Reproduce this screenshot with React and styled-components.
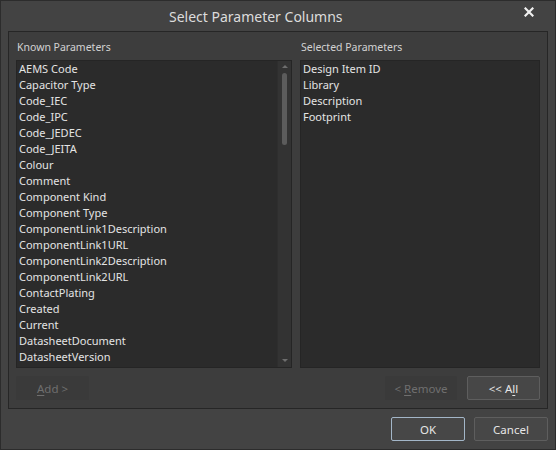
import React from 'react'
import styled, { createGlobalStyle } from 'styled-components'

const Global = createGlobalStyle`
  html, body {
    margin: 0;
    padding: 0;
    background: #424242;
  }
  body {
    font-family: "Noto Sans", "Open Sans", sans-serif;
  }
`

const Window = styled.div`
  width: 556px;
  height: 450px;
  box-sizing: border-box;
  border: 1px solid #2c2c2c;
  background: #434343;
  display: flex;
  flex-direction: column;
`

const TitleBar = styled.div`
  height: 30px;
  display: flex;
  align-items: center;
  position: relative;
  color: #dcdcdc;
  font-size: 14px;
  font-weight: 400;
  padding-left: 168px;
  box-sizing: border-box;
`

const Close = styled.div`
  position: absolute;
  right: 20px;
  top: 5px;
  width: 12px;
  height: 12px;
  display: flex;
  align-items: center;
  justify-content: center;
`

const Group = styled.div`
  margin: 0 7px;
  height: 378px;
  box-sizing: border-box;
  border: 1px solid #262626;
  background: #3d3d3d;
  padding: 6px 6px 0 7px;
  display: flex;
  flex-direction: column;
`

const Columns = styled.div`
  display: grid;
  grid-template-columns: 276px 240px;
  column-gap: 8px;
`

const Label = styled.div`
  font-size: 10.5px;
  color: #d2d2d2;
  height: 22px;
  padding-left: 1px;
  line-height: 18px;
`

const ListBox = styled.div`
  height: 308px;
  box-sizing: border-box;
  border: 1px solid #252525;
  background: #2b2b2b;
  display: flex;
  overflow: hidden;
`

const Items = styled.div`
  flex: 1;
  padding: 0 0 0 2px;
`

const Item = styled.div`
  height: 16px;
  line-height: 16px;
  font-size: 11px;
  color: #e4e4e4;
  white-space: nowrap;
`

const Scroll = styled.div`
  width: 13px;
  background: #333333;
  border-left: 1px solid #2e2e2e;
  display: flex;
  flex-direction: column;
  align-items: center;
`

const Arrow = styled.div`
  width: 0;
  height: 0;
  border-left: 3px solid transparent;
  border-right: 3px solid transparent;
  ${p => p.$up
    ? 'border-bottom: 3px solid #6e6e6e; margin: 4px 0 5px;'
    : 'border-top: 3px solid #6e6e6e; margin: auto 0 5px;'}
`

const Thumb = styled.div`
  width: 5px;
  height: 72px;
  border-radius: 3px;
  background: #5c5c5c;
`

const ButtonRow = styled.div`
  display: flex;
  margin-top: 8px;
  height: 24px;
  gap: 10px;
  justify-content: ${p => p.$end ? 'flex-end' : 'flex-start'};
`

const Btn = styled.div`
  width: ${p => p.$w || 73}px;
  height: 24px;
  box-sizing: border-box;
  border-radius: 2px;
  display: flex;
  align-items: center;
  justify-content: center;
  font-size: 11.5px;
  color: ${p => p.$disabled ? '#6f6f6f' : '#e6e6e6'};
  background: ${p => p.$disabled ? '#3a3a3a' : '#474747'};
  border: 1px solid ${p => p.$disabled ? '#3a3a3a' : p.$primary ? '#a3b6c8' : '#5e5e5e'};
  & u { text-decoration: underline; text-underline-offset: 2px; }
`

const Footer = styled.div`
  display: flex;
  justify-content: flex-end;
  gap: 9px;
  padding: 8px 7px 0 0;
`

const known = [
  'AEMS Code', 'Capacitor Type', 'Code_IEC', 'Code_IPC', 'Code_JEDEC', 'Code_JEITA',
  'Colour', 'Comment', 'Component Kind', 'Component Type', 'ComponentLink1Description',
  'ComponentLink1URL', 'ComponentLink2Description', 'ComponentLink2URL', 'ContactPlating',
  'Created', 'Current', 'DatasheetDocument', 'DatasheetVersion'
]

const selected = ['Design Item ID', 'Library', 'Description', 'Footprint']

export default function App() {
  return (
    <>
      <Global />
      <Window>
        <TitleBar>
          Select Parameter Columns
          <Close>
            <svg width="10" height="10" viewBox="0 0 10 10">
              <path d="M1.5 1.5 L8.5 8.5 M8.5 1.5 L1.5 8.5" stroke="#f0f0f0" strokeWidth="2.2" strokeLinecap="square" />
            </svg>
          </Close>
        </TitleBar>
        <Group>
          <Columns>
            <Label>Known Parameters</Label>
            <Label>Selected Parameters</Label>
            <ListBox>
              <Items>
                {known.map(k => <Item key={k}>{k}</Item>)}
              </Items>
              <Scroll>
                <Arrow $up />
                <Thumb />
                <Arrow />
              </Scroll>
            </ListBox>
            <ListBox>
              <Items>
                {selected.map(k => <Item key={k}>{k}</Item>)}
              </Items>
            </ListBox>
            <ButtonRow>
              <Btn $disabled><span><u>A</u>dd &gt;</span></Btn>
            </ButtonRow>
            <ButtonRow $end>
              <Btn $disabled $w={72}><span>&lt; <u>R</u>emove</span></Btn>
              <Btn><span>&lt;&lt; A<u>l</u>l</span></Btn>
            </ButtonRow>
          </Columns>
        </Group>
        <Footer>
          <Btn $w={74} $primary>OK</Btn>
          <Btn $w={74}>Cancel</Btn>
        </Footer>
      </Window>
    </>
  )
}
